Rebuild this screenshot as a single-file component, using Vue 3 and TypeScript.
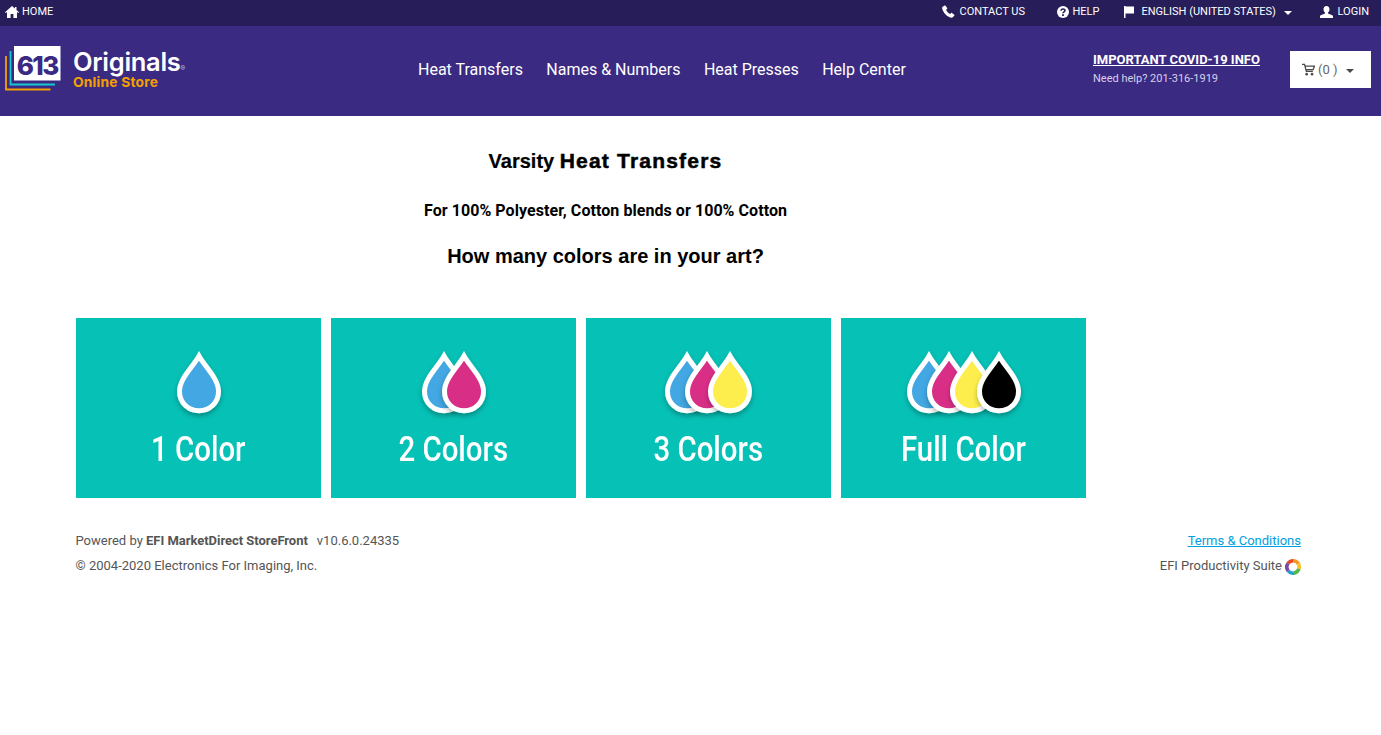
<script setup lang="ts">
interface Card { label: string; colors: string[]; offsets: number[] }
const cards: Card[] = [
  { label: '1 Color', colors: ['#42a7e2'], offsets: [0] },
  { label: '2 Colors', colors: ['#42a7e2', '#d92e86'], offsets: [0, 20] },
  { label: '3 Colors', colors: ['#42a7e2', '#d92e86', '#fdee4e'], offsets: [0, 20, 43] },
  { label: 'Full Color', colors: ['#42a7e2', '#d92e86', '#fdee4e', '#000000'], offsets: [0, 20, 43, 70] }
]
const nav = ['Heat Transfers', 'Names & Numbers', 'Heat Presses', 'Help Center']
const dropWidth = (c: Card) => 44 + c.offsets[c.offsets.length - 1]
</script>

<template>
  <div class="page">
    <div class="topbar">
      <a class="top-item">
        <svg class="ico home" width="14" height="12" viewBox="0 0 14 12"><path fill="#fff" d="M7 0 0 6.2l.8.8L2 6v6h3.6V8h2.8v4H12V6l1.2 1 .8-.8L11.5 4V1H10v1.6z"/></svg>
        <span>HOME</span>
      </a>
      <div class="top-right">
        <a class="top-item contact">
          <svg class="ico" width="13" height="13" viewBox="0 0 13 13"><path fill="#fff" d="M2.6.6.7 1.8C.2 2.2 0 3 .3 3.9c1.2 4 4.5 7.4 8.2 8.7 1 .3 1.8.2 2.3-.3l1.6-1.7c.2-.3.2-.6-.1-.9L10 8c-.3-.2-.6-.2-.9 0l-1 1c-1.800-.7-3.300-2.500-4-4.300l1-.9c.3-.3.3-.6.1-.9L3.500.8C3.200.5 2.900.4 2.600.6z"/></svg>
          <span>CONTACT US</span>
        </a>
        <a class="top-item help">
          <svg class="ico" width="12" height="12" viewBox="0 0 12 12"><circle cx="6" cy="6" r="6" fill="#fff"/><path fill="none" stroke="#271d58" stroke-width="1.600" d="M4.100 4.700C4.100 2.400 8 2.500 8 4.500 8 5.900 6 5.800 6 7.300"/><rect x="5.100" y="8.200" width="1.800" height="1.800" fill="#271d58"/></svg>
          <span>HELP</span>
        </a>
        <a class="top-item lang">
          <svg class="ico" width="10" height="12" viewBox="0 0 10 12"><path fill="#fff" d="M0 0h1.500v.6H10v6.800H1.500V12H0z"/></svg>
          <span>ENGLISH (UNITED STATES)</span>
          <i class="caret light"></i>
        </a>
        <a class="top-item login">
          <svg class="ico" width="13" height="12" viewBox="0 0 13 12"><path fill="#fff" d="M6.500 0c1.900 0 3 1.300 3 3.200 0 1.500-.7 2.700-1.500 3.300v1.100l3.700 1.500c.8.300 1.300.8 1.300 1.500V12H0v-1.400c0-.7.500-1.200 1.300-1.500L5 7.600V6.500C4.200 5.900 3.500 4.700 3.500 3.200 3.500 1.300 4.600 0 6.500 0z"/></svg>
          <span>LOGIN</span>
        </a>
      </div>
    </div>

    <header class="header">
      <div class="logo">
        <svg class="mark" width="58" height="46" viewBox="0 0 58 46">
          <path fill="none" stroke="#f5a000" stroke-width="1.800" d="M1 10v33.500h44.500"/>
          <path fill="none" stroke="#14c7cf" stroke-width="1.800" d="M5.500 5v33.500H50"/>
          <rect x="9" y="0" width="46.500" height="34.500" fill="#fff"/>
          <text x="32.300" y="29" text-anchor="middle" class="mark-text">613</text>
        </svg>
        <div class="logo-text">
          <div class="logo-main">Originals<span class="reg">®</span></div>
          <div class="logo-sub">Online Store</div>
        </div>
      </div>
      <nav class="nav">
        <a v-for="n in nav" :key="n">{{ n }}</a>
      </nav>
      <div class="info">
        <a class="covid">IMPORTANT COVID-19 INFO</a>
        <div class="phone">Need help? 201-316-1919</div>
      </div>
      <button class="cart" type="button">
        <svg width="13" height="13" viewBox="0 0 14 14"><path fill="none" stroke="#4a4a4a" stroke-width="1.400" d="M0 1.500h2.700l2 7.500h7M3.200 3.300h10.200l-1.400 3.900H4.300"/><circle cx="5" cy="12" r="1.400" fill="#4a4a4a"/><circle cx="10.800" cy="12" r="1.400" fill="#4a4a4a"/></svg>
        <span class="cart-count">(0 )</span>
        <i class="caret dark"></i>
      </button>
    </header>

    <main class="main">
      <div class="titles">
        <h1 class="t1"><span class="thin">Varsity</span> <span class="wide">Heat Transfers</span></h1>
        <h2 class="t2">For 100% Polyester, Cotton blends or 100% Cotton</h2>
        <h3 class="t3">How many colors are in your art?</h3>
      </div>
      <div class="cards">
        <a v-for="c in cards" :key="c.label" class="card">
          <svg class="drops" :width="dropWidth(c) + 12" height="76" :viewBox="`-6 -1 ${dropWidth(c) + 12} 76`">
            <defs>
              <filter id="ds" x="-30%" y="-20%" width="160%" height="150%">
                <feDropShadow dx="0" dy="3" stdDeviation="2.500" flood-color="#000" flood-opacity="0.280"/>
              </filter>
            </defs>
            <g v-for="(col, i) in c.colors" :key="i" :transform="`translate(${c.offsets[i]} 0)`" filter="url(#ds)">
              <path class="drop" :fill="col" d="M22 5C28.500 16.500 41.500 27.500 41.500 40.500 41.500 51.500 32.800 59.800 22 59.800S2.500 51.500 2.500 40.500C2.500 27.500 15.500 16.500 22 5Z"/>
            </g>
          </svg>
          <span class="label">{{ c.label }}</span>
        </a>
      </div>
      <footer class="footer">
        <div class="foot-row">
          <span>Powered by <b>EFI MarketDirect StoreFront</b><span class="ver">v10.6.0.24335</span></span>
          <a class="terms">Terms &amp; Conditions</a>
        </div>
        <div class="foot-row second">
          <span>© 2004-2020 Electronics For Imaging, Inc.</span>
          <span class="suite">EFI Productivity Suite
            <svg width="16" height="16" viewBox="0 0 16 16">
              <g fill="none" stroke-width="3.600">
                <path stroke="#e8472b" d="M3 4.500A6.200 6.200 0 0 1 8 1.800"/>
                <path stroke="#f39a1f" d="M8 1.800a6.200 6.200 0 0 1 5.400 3.100"/>
                <path stroke="#f7c31c" d="M13.400 4.900a6.200 6.200 0 0 1 .5 4.900"/>
                <path stroke="#55b948" d="M13.900 9.800A6.200 6.200 0 0 1 9 14.100"/>
                <path stroke="#1e9fd8" d="M9 14.100a6.200 6.200 0 0 1-5.800-2.200"/>
                <path stroke="#7a4a9c" d="M3.200 11.900A6.200 6.200 0 0 1 3 4.500"/>
              </g>
            </svg>
          </span>
        </div>
      </footer>
    </main>
  </div>
</template>

<style>
html, body { margin: 0; background: #fff; }
</style>

<style scoped>
.page { font-family: Roboto, "Liberation Sans", sans-serif; color: #555; }
a { cursor: pointer; }

.topbar {
  height: 26px;
  background: #271d58;
  display: flex;
  justify-content: space-between;
  align-items: flex-start;
  padding: 0 12px 0 5px;
  box-sizing: border-box;
  color: #fff;
  font-size: 11px;
  line-height: 22px;
}
.top-right { display: flex; }
.top-item { display: flex; align-items: center; height: 23px; color: #fff; }
.ico { display: block; margin-right: 5px; }
.ico.home { margin-right: 3px; }
.contact { width: 115px; }
.help { width: 67px; }
.help .ico { margin-right: 4px; }
.lang { width: 196px; }
.lang .ico { margin-right: 8px; }
.caret { display: block; width: 0; height: 0; border-left: 4px solid transparent; border-right: 4px solid transparent; }
.caret.light { border-top: 4px solid #fff; margin: 3px 0 0 8px; }
.caret.dark { border-top: 4px solid #4a4a4a; margin: 2px 0 0 8px; }

.header {
  height: 90px;
  background: #3b2a82;
  display: flex;
  align-items: flex-start;
  padding: 0 10px 0 5px;
  box-sizing: border-box;
}
.logo { display: flex; width: 413px; height: 46px; margin-top: 20px; }
.mark { display: block; flex: none; }
.mark-text { font: 800 26px Inter, Roboto, sans-serif; fill: #3b2a82; letter-spacing: -1.5px; }
.logo-text { margin-left: 10px; }
.logo-main { font: 600 25.500px/26px Inter, sans-serif; color: #fff; letter-spacing: -0.3px; margin-top: 3px; }
.reg { font-size: 7px; line-height: 0; color: #b7b0d6; letter-spacing: 0; }
.logo-sub { font: 700 13.800px/15px Inter, sans-serif; color: #f5a000; letter-spacing: 0.2px; }

.nav { display: flex; gap: 23.400px; font-size: 16px; line-height: 20px; width: 675px; color: #fff; margin-top: 34px; }
.nav a { color: #fff; white-space: nowrap; }

.info { width: 197px; color: #fff; margin-top: 25px; }
.covid { display: block; font-weight: 700; font-size: 13px; line-height: 18px; text-decoration: underline; color: #fff; }
.phone { font-size: 11px; line-height: 18px; margin-top: 1px; color: #d5d0ea; }

.cart {
  width: 81px;
  height: 37px;
  margin-top: 25px;
  background: #fff;
  border: 0;
  padding: 0 0 0 12px;
  display: flex;
  align-items: center;
  font-family: inherit;
  color: #666;
  font-size: 13px;
}
.cart-count { margin-left: 3px; }

.main { padding: 30px 0 0 76px; width: 1225px; }
.titles { width: 1059px; text-align: center; color: #000; font-family: "Liberation Sans", sans-serif; }
.t1 { margin: 0; font-size: 20px; line-height: 30px; font-weight: 700; }
.thin { -webkit-text-stroke: 0.2px #000; }
.wide { font-size: 21px; letter-spacing: 1.2px; -webkit-text-stroke: 0.5px #000; }
.t2 { margin: 23px 0 0; font-family: Roboto, sans-serif; font-size: 16px; line-height: 24px; font-weight: 700; letter-spacing: 0.06px; }
.t3 { margin: 18px 0 0; font-size: 20px; line-height: 30px; font-weight: 700; }

.cards { display: flex; gap: 10px; margin-top: 47px; }
.card {
  width: 245px;
  height: 180px;
  background: #06c1b6;
  display: flex;
  flex-direction: column;
  align-items: center;
  box-sizing: border-box;
  padding-top: 32px;
}
.drops { display: block; }
.drop { stroke: #fff; stroke-width: 5; stroke-miterlimit: 10; }
.label {
  color: #fff;
  font-family: Roboto, sans-serif;
  font-weight: 500;
  font-size: 35px;
  line-height: 42px;
  margin-top: 3px;
  white-space: nowrap;
  transform: scaleX(0.84);
}

.footer { margin: 33px 0 0 -0.5px; font-size: 13px; line-height: 20px; color: #555; }
.foot-row { display: flex; justify-content: space-between; }
.foot-row b { letter-spacing: -0.03px; }
.second { margin-top: 5px; }
.ver { margin-left: 9px; }
.terms { color: #00a0e0; text-decoration: underline; }
.suite { display: flex; align-items: center; gap: 3px; }
.suite svg { display: block; margin-top: 2px; }
</style>
